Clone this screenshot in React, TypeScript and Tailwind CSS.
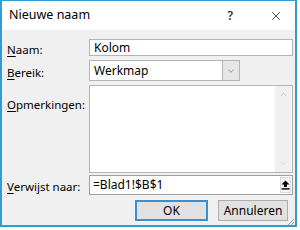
import { X, ChevronDown, ChevronUp } from 'lucide-react'

// Windows-style "Nieuwe naam" dialog

const font = { fontFamily: '"Noto Sans", "Open Sans", sans-serif' }

function Label({ hot, rest }: { hot: string; rest: string }) {
  return (
    <span className="text-[11.5px] text-black leading-none">
      <span className="underline underline-offset-2">{hot}</span>
      {rest}
    </span>
  )
}

function CollapseIcon() {
  return (
    <svg width="9" height="10" viewBox="0 0 9 10">
      <path d="M4.5 0.5 L8.5 4.5 L6 4.5 L6 7 L3 7 L3 4.5 L0.5 4.5 Z" fill="#000" />
      <rect x="0.5" y="8.2" width="8" height="1.4" fill="#000" />
    </svg>
  )
}

export default function App() {
  return (
    <div className="w-[300px] h-[230px] bg-white" style={font}>
      <div className="w-[297px] h-[227px] flex flex-col border-x-2 border-b-2 border-t border-[#2f9bd7]">
        {/* Title bar */}
        <div className="h-[29px] bg-white flex items-center pl-[7px] pr-[12px]">
          <span className="text-[12.5px] text-black flex-1">Nieuwe naam</span>
          <span className="text-[12px] text-[#333] mr-[36px] font-semibold">?</span>
          <X className="w-[14px] h-[14px] text-[#222]" strokeWidth={1.3} />
        </div>

        {/* Body */}
        <div className="flex-1 bg-[#f0f0f0] pl-[5px] pr-[1px] pt-[9px] flex flex-col">
          {/* Naam */}
          <div className="flex items-center h-[17px]">
            <div className="w-[82px]">
              <Label hot="N" rest="aam:" />
            </div>
            <div className="w-[204px] h-[17px] bg-white border border-[#b4b4b4] flex items-center pl-[4px] text-[12px] text-black">
              Kolom
            </div>
          </div>

          {/* Bereik */}
          <div className="flex items-center h-[21px] mt-[4px]">
            <div className="w-[82px]">
              <Label hot="B" rest="ereik:" />
            </div>
            <div className="w-[151px] h-[21px] bg-white border border-[#b4b4b4] flex items-center">
              <span className="flex-1 pl-[4px] text-[12px] text-black">Werkmap</span>
              <div className="w-[17px] h-[19px] bg-[#e6e6e6] border-l border-[#b4b4b4] flex items-center justify-center">
                <ChevronDown className="w-[10px] h-[10px] text-[#8a8a8a]" strokeWidth={2} />
              </div>
            </div>
          </div>

          {/* Opmerkingen */}
          <div className="flex h-[88px] mt-[4px]">
            <div className="w-[82px] pt-[6px]">
              <Label hot="O" rest="pmerkingen:" />
            </div>
            <div className="w-[204px] h-[88px] bg-white border border-[#b4b4b4] flex justify-end">
              <div className="w-[16px] h-full bg-[#f0f0f0] flex flex-col items-center justify-between py-[4px] mr-[1px]">
                <ChevronUp className="w-[9px] h-[9px] text-[#c2c2c2]" strokeWidth={2.5} />
                <ChevronDown className="w-[9px] h-[9px] text-[#d4d4d4]" strokeWidth={2.5} />
              </div>
            </div>
          </div>

          {/* Verwijst naar */}
          <div className="flex items-center h-[20px] mt-[2px]">
            <div className="w-[82px]">
              <Label hot="V" rest="erwijst naar:" />
            </div>
            <div className="w-[204px] h-[20px] bg-white border border-[#a0a0a0] flex items-center">
              <span className="flex-1 pl-[3px] text-[12px] text-black">=Blad1!$B$1</span>
              <div className="w-[11px] h-[16px] mr-[1px] bg-[#f4f4f4] border border-[#dcdcdc] flex items-center justify-center">
                <CollapseIcon />
              </div>
            </div>
          </div>

          {/* Buttons */}
          <div className="flex items-start mt-[5px] relative flex-1">
            <div className="ml-[128px] w-[73px] h-[21px] bg-[#e1e1e1] border-2 border-[#3a8fd3] flex items-center justify-center text-[12px] text-black">
              OK
            </div>
            <div className="ml-[10px] w-[70px] h-[21px] bg-[#e1e1e1] border border-[#adadad] flex items-center justify-center text-[12px] text-black">
              Annuleren
            </div>
            {/* resize grip */}
            <svg className="absolute right-[0px] bottom-[0px]" width="7" height="7" viewBox="0 0 7 7">
              <path d="M7 1 L1 7 M7 4 L4 7" stroke="#a8a8a8" strokeWidth="1" />
            </svg>
          </div>
        </div>
      </div>
    </div>
  )
}
